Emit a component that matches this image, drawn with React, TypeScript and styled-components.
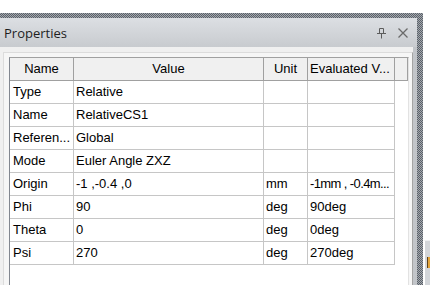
import React from 'react';
import styled, { createGlobalStyle } from 'styled-components';

const GlobalStyle = createGlobalStyle`
  html, body { margin: 0; padding: 0; background: #fff; }
  body {
    width: 430px;
    height: 285px;
    overflow: hidden;
    font-family: "Liberation Sans", Arial, sans-serif;
  }
`;

const checker = 'repeating-conic-gradient(#5b6169 0 25%, #a2a7ad 0 50%) 0 0 / 2px 2px';

const Desktop = styled.div`
  display: grid;
  grid-template-columns: 417px 6px 7px;
  grid-template-rows: 13px 5px 267px;
  width: 430px;
  height: 285px;
  background: #fff;
`;

const TopGap = styled.div`
  grid-column: 1 / 4;
  background: #fff;
`;

const HSplitter = styled.div`
  grid-column: 1 / 3;
  background: ${checker};
`;

const Corner = styled.div`
  background: #fff;
`;

const VSplitter = styled.div`
  background: ${checker};
`;

const Pane = styled.div`
  display: flex;
  flex-direction: column;
  overflow: hidden;
`;

const TitleBar = styled.div`
  height: 29px;
  flex: none;
  display: flex;
  align-items: center;
  padding: 0 9px 0 4px;
  background: linear-gradient(#dcdfe3, #c8cbcf);
`;

const Title = styled.span`
  font-family: "Open Sans", "Noto Sans", sans-serif;
  font-size: 13px;
  color: #1e1e1e;
  padding-top: 1px;
`;

const Buttons = styled.div`
  margin-left: auto;
  display: flex;
  align-items: center;
  gap: 11px;
  padding-top: 1px;
`;

const Content = styled.div`
  flex: 1;
  display: flex;
  min-height: 0;
  padding: 5px 0 0 3px;
  background: #f0f0f0;
  border-right: 4px solid #c2c5c9;
`;

const Frame = styled.div`
  flex: 1;
  display: flex;
  padding: 4px 3px 0 5px;
  background: #f6f6f6;
  border: 1px solid #dcdcdc;
  border-right-color: #a4a4a4;
  border-bottom: none;
`;

const Grid = styled.div`
  flex: 1;
  display: grid;
  grid-template-columns: 64px 190px 44px 87px 1fr;
  grid-auto-rows: 23px;
  align-content: start;
  background: #fff;
  border-left: 1px solid #828790;
  border-top: 1px solid #a0a0a0;
  border-right: 1px solid #e2e2e2;
`;

const HeadCell = styled.div<{ $left?: boolean }>`
  box-sizing: border-box;
  background: #f0f0f0;
  border-right: 1px solid #a0a0a0;
  border-bottom: 1px solid #a0a0a0;
  font-size: 13px;
  line-height: 22px;
  color: #000;
  white-space: nowrap;
  overflow: hidden;
  text-align: ${p => (p.$left ? 'left' : 'center')};
  padding-left: ${p => (p.$left ? '2px' : '0')};
`;

const Cell = styled.div<{ $pad?: number; $tight?: boolean }>`
  box-sizing: border-box;
  border-right: 1px solid #c6c6c6;
  border-bottom: 1px solid #c6c6c6;
  font-size: 13px;
  line-height: 22px;
  color: #000;
  white-space: nowrap;
  overflow: hidden;
  padding-left: ${p => p.$pad ?? 2}px;
  letter-spacing: ${p => (p.$tight ? '-0.6px' : 'normal')};
`;

const Blank = styled.div``;

const Side = styled.div`
  display: flex;
  flex-direction: column;
`;

const SideWhite = styled.div`
  height: 222px;
  background: #fff;
`;

const Toolbox = styled.div`
  flex: 1;
  display: flex;
  justify-content: flex-end;
  padding-top: 16px;
  background: #d3d6da;
  border-top: 1px solid #eef0f2;
  border-left: 2px solid #fff;
`;

const Swatch = styled.div`
  width: 2px;
  height: 11px;
  background: #e3a43a;
  border-left: 1px solid #5d4320;
`;

const PinIcon = () => (
  <svg width="11" height="11" viewBox="0 0 11 11">
    <path d="M3.5 0.5h4v5h-4z M1 5.5h9 M5.5 5.5v5" fill="none" stroke="#5c5c5c" strokeWidth="1" />
  </svg>
);

const CloseIcon = () => (
  <svg width="10" height="10" viewBox="0 0 10 10">
    <path d="M0.5 0.5l9 9 M9.5 0.5l-9 9" fill="none" stroke="#6a6a6a" strokeWidth="1.3" />
  </svg>
);

const rows: [string, string, string, string][] = [
  ['Type', 'Relative', '', ''],
  ['Name', 'RelativeCS1', '', ''],
  ['Referen...', 'Global', '', ''],
  ['Mode', 'Euler Angle ZXZ', '', ''],
  ['Origin', '-1 ,-0.4 ,0', 'mm', '-1mm , -0.4m...'],
  ['Phi', '90', 'deg', '90deg'],
  ['Theta', '0', 'deg', '0deg'],
  ['Psi', '270', 'deg', '270deg'],
];

export default function App() {
  return (
    <>
      <GlobalStyle />
      <Desktop>
        <TopGap />
        <HSplitter />
        <Corner />
        <Pane>
          <TitleBar>
            <Title>Properties</Title>
            <Buttons>
              <PinIcon />
              <CloseIcon />
            </Buttons>
          </TitleBar>
          <Content>
            <Frame>
              <Grid>
                <HeadCell>Name</HeadCell>
                <HeadCell>Value</HeadCell>
                <HeadCell>Unit</HeadCell>
                <HeadCell $left>Evaluated V...</HeadCell>
                <HeadCell />
                {rows.map((r, i) => (
                  <React.Fragment key={i}>
                    <Cell $pad={3}>{r[0]}</Cell>
                    <Cell>{r[1]}</Cell>
                    <Cell>{r[2]}</Cell>
                    <Cell $tight={r[3].length > 12}>{r[3]}</Cell>
                    <Blank />
                  </React.Fragment>
                ))}
              </Grid>
            </Frame>
          </Content>
        </Pane>
        <VSplitter />
        <Side>
          <SideWhite />
          <Toolbox>
            <Swatch />
          </Toolbox>
        </Side>
      </Desktop>
    </>
  );
}
